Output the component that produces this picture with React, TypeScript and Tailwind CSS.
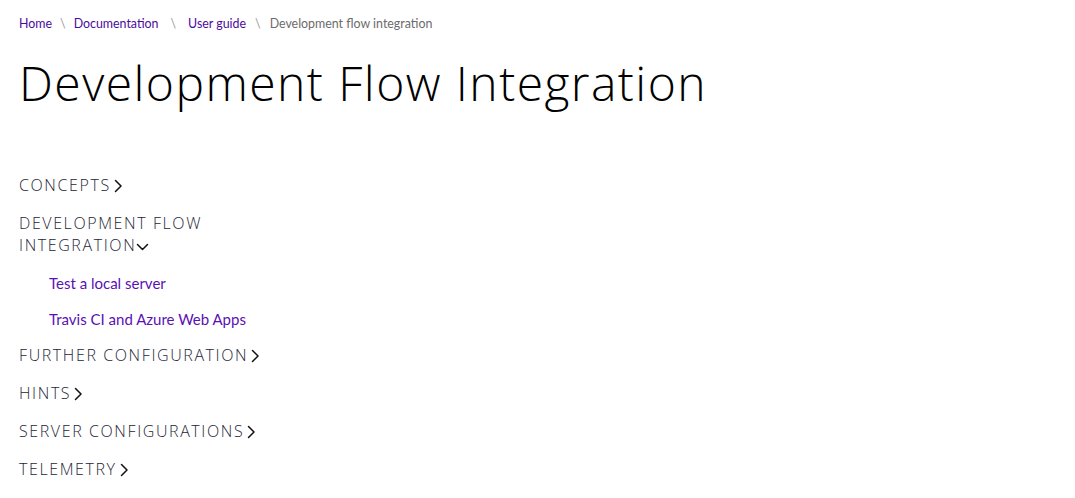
import React from "react";

const Chevron = ({ down = false }: { down?: boolean }) =>
  down ? (
    <svg width="13" height="10" viewBox="0 0 13 10" className="inline-block align-[-1px]" fill="none" stroke="#111" strokeWidth="1.5" strokeLinecap="round" strokeLinejoin="round">
      <path d="M1.5 2.5 L6.5 7.5 L11.5 2.5" />
    </svg>
  ) : (
    <svg width="10" height="14" viewBox="0 0 10 14" className="inline-block ml-[2px] align-[-2px]" fill="none" stroke="#111" strokeWidth="1.5" strokeLinecap="round" strokeLinejoin="round">
      <path d="M2.5 1.5 L8 7 L2.5 12.5" />
    </svg>
  );

export default function App() {
  const sans = { fontFamily: '"Open Sans", "Noto Sans", sans-serif' };
  const lato = { fontFamily: 'Lato, "Noto Sans", sans-serif' };
  return (
    <div className="min-h-screen bg-white" style={sans}>
      <div className="pl-[19px] pt-[15px]">
        <nav className="flex items-center text-[12.4px] leading-[17px]" style={lato}>
          <a className="text-[#4b0aa0]">Home</a>
          <span className="mx-[8px] text-[#999]">\</span>
          <a className="text-[#4b0aa0]">Documentation</a>
          <span className="mx-[12px] text-[#999]">\</span>
          <a className="text-[#4b0aa0]">User guide</a>
          <span className="mx-[9px] text-[#999]">\</span>
          <span className="text-[#6b6b6b]">Development flow integration</span>
        </nav>
        <h1 className="mt-[21px] text-[48px] leading-[60px] font-light text-black tracking-[1.45px]">
          Development Flow Integration
        </h1>
        <ul className="mt-[61px] w-[250px] text-[16px] text-[#262636] tracking-[1.6px] font-light">
          <li className="leading-[22px] mb-[16px]">
            CONCEPTS<Chevron />
          </li>
          <li className="leading-[22px] mb-[14px]">
            DEVELOPMENT FLOW INTEGRATION<Chevron down />
            <ul className="mt-[16px] pl-[30px] text-[15px] tracking-normal font-normal text-[#5a10b4]" style={lato}>
              <li className="leading-[22px] mb-[14px]">Test a local server</li>
              <li className="leading-[22px]">Travis CI and Azure Web Apps</li>
            </ul>
          </li>
          <li className="leading-[22px] mb-[16px]">
            FURTHER CONFIGURATION<Chevron />
          </li>
          <li className="leading-[22px] mb-[16px]">
            HINTS<Chevron />
          </li>
          <li className="leading-[22px] mb-[16px]">
            SERVER CONFIGURATIONS<Chevron />
          </li>
          <li className="leading-[22px]">
            TELEMETRY<Chevron />
          </li>
        </ul>
      </div>
    </div>
  );
}
